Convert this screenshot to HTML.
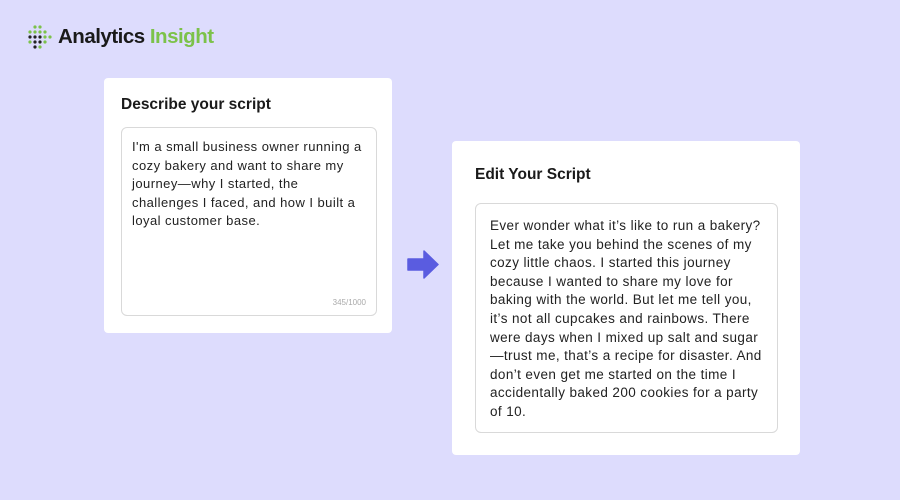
<!DOCTYPE html>
<html><head><style>
body{margin:0;width:900px;height:500px;background:#dddcfd;font-family:"Liberation Sans",sans-serif;position:relative;overflow:hidden}
.card{position:absolute;background:#fff;border-radius:4px}
.t{position:absolute;font-weight:bold;color:#1a1a1a;font-size:15.5px}
.box{position:absolute;border:1px solid #d9d9d9;border-radius:6px;color:#222;font-size:13px;white-space:nowrap}
</style></head><body>
<div style="position:absolute;left:26px;top:25px;width:26px;height:26px">
<svg width="26" height="26" viewBox="0 0 26 26">
<g fill="#7cc24a"><circle cx="9" cy="2" r="1.6"/><circle cx="14" cy="2" r="1.6"/><circle cx="4" cy="7" r="1.6"/><circle cx="9" cy="7" r="1.6"/><circle cx="14" cy="7" r="1.6"/><circle cx="19" cy="7" r="1.6"/><circle cx="19" cy="12" r="1.6"/><circle cx="24" cy="12" r="1.6"/><circle cx="19" cy="17" r="1.6"/><circle cx="4" cy="17" r="1.6"/><circle cx="14" cy="22" r="1.6"/></g>
<g fill="#222"><circle cx="4" cy="12" r="1.6"/><circle cx="9" cy="12" r="1.6"/><circle cx="14" cy="12" r="1.6"/><circle cx="9" cy="17" r="1.6"/><circle cx="14" cy="17" r="1.6"/><circle cx="9" cy="22" r="1.6"/></g>
</svg></div>
<div style="position:absolute;left:58px;top:25px;font-size:20.5px;font-weight:bold;color:#1a1a1a;letter-spacing:-0.5px">Analytics <span style="color:#7cc24a">Insight</span></div>

<div class="card" style="left:104px;top:78px;width:288px;height:255px"></div>
<div class="t" style="left:121px;top:96px">Describe your script</div>
<div class="box" style="left:121px;top:127px;width:254px;height:187px">
<div style="position:absolute;left:10px;top:10px;line-height:18.5px;letter-spacing:0.45px">I'm a small business owner running a<br>cozy bakery and want to share my<br>journey—why I started, the<br>challenges I faced, and how I built a<br>loyal customer base.</div>
<div style="position:absolute;right:10px;bottom:8px;font-size:8px;color:#aaa">345/1000</div>
</div>

<svg style="position:absolute;left:407px;top:250px" width="32" height="29" viewBox="0 0 32 29"><path d="M1 9h16V1l14 13.5L17 28v-8H1z" fill="#5a5ce0" stroke="#5a5ce0" stroke-linejoin="round" stroke-width="1.5"/></svg>

<div class="card" style="left:452px;top:141px;width:348px;height:314px"></div>
<div class="t" style="left:475px;top:166px">Edit Your Script</div>
<div class="box" style="left:475px;top:203px;width:301px;height:228px">
<div style="position:absolute;left:14px;top:13px;font-size:13.5px;line-height:18.6px;letter-spacing:0.4px">Ever wonder what it’s like to run a bakery?<br>Let me take you behind the scenes of my<br>cozy little chaos. I started this journey<br>because I wanted to share my love for<br>baking with the world. But let me tell you,<br>it’s not all cupcakes and rainbows. There<br>were days when I mixed up salt and sugar<br>—trust me, that’s a recipe for disaster. And<br>don’t even get me started on the time I<br>accidentally baked 200 cookies for a party<br>of 10.</div>
</div>
</body></html>
